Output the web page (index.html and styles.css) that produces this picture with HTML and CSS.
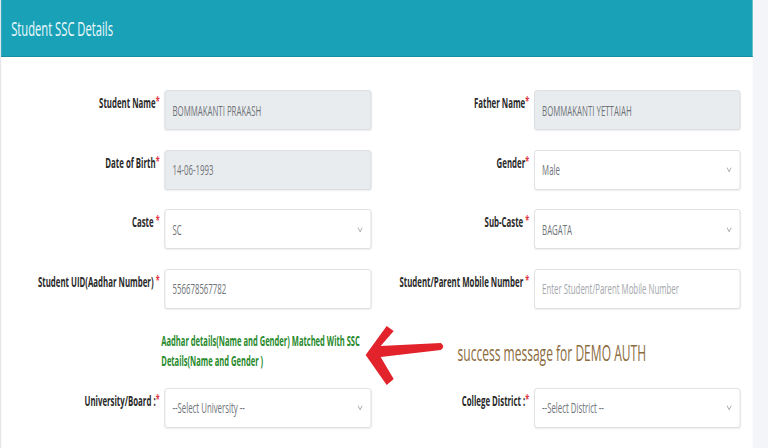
FILE: index.html
```html
<!DOCTYPE html>
<html lang="en">
<head>
    <meta charset="UTF-8">
    <meta name="viewport" content="width=device-width, initial-scale=1.0">
    <title>Student SSC Details</title>
    <link rel="stylesheet" href="styles.css">
</head>
<body>
    <div class="page">
        <div class="card">
            <div class="card-header">Student SSC Details</div>

            <div class="card-body">
                <div class="form-grid">
                    <label class="field-label">Student Name<span class="req">*</span></label>
                    <div class="field readonly">BOMMAKANTI PRAKASH</div>
                    <label class="field-label">Father Name<span class="req">*</span></label>
                    <div class="field readonly">BOMMAKANTI YETTAIAH</div>

                    <label class="field-label">Date of Birth<span class="req">*</span></label>
                    <div class="field readonly">14-06-1993</div>
                    <label class="field-label">Gender<span class="req">*</span></label>
                    <div class="field select">Male</div>

                    <label class="field-label">Caste <span class="req">*</span></label>
                    <div class="field select">SC</div>
                    <label class="field-label">Sub-Caste <span class="req">*</span></label>
                    <div class="field select">BAGATA</div>

                    <label class="field-label">Student UID(Aadhar Number) <span class="req">*</span></label>
                    <div class="field">556678567782</div>
                    <label class="field-label">Student/Parent Mobile Number <span class="req">*</span></label>
                    <div class="field placeholder">Enter Student/Parent Mobile Number</div>

                    <div class="match-msg">Aadhar details(Name and Gender) Matched With SSC Details(Name and Gender )</div>

                    <label class="field-label">University/Board :<span class="req">*</span></label>
                    <div class="field select">--Select University --</div>
                    <label class="field-label">College District :<span class="req">*</span></label>
                    <div class="field select">--Select District --</div>
                </div>

                <!-- annotation drawn over the screenshot -->
                <div class="note">
                    <svg class="note-arrow" viewBox="0 0 85 65" preserveAspectRatio="none">
                        <path d="M5 32 L26 3 L33 8 L20 23 L80 20 Q85 23.5 80 27 L20 34 L33 56 L26 62 Z" fill="#e3232b"/>
                    </svg>
                    <span class="note-text">success message for DEMO AUTH</span>
                </div>
            </div>
        </div>
    </div>
</body>
</html>
```

FILE: styles.css
```css
* {
    margin: 0;
    padding: 0;
    box-sizing: border-box;
    font-family: 'Open Sans', 'Liberation Sans', sans-serif;
}

html,
body {
    overflow: hidden;
    height: 448px;
}

body {
    background: #f4f5f8;
}

/* the source screenshot is squeezed horizontally */
.page {
    width: 1372px;
    transform: scaleX(0.56);
    transform-origin: 0 0;
}

.card {
    width: 1344px;
    height: 448px;
    background: #fff;
    border-left: 2px solid #e4e6ea;
}

.card-header {
    height: 57px;
    background: #19a2b7;
    border-bottom: 1px solid #148fa2;
    color: #eef9fb;
    font-size: 20px;
    line-height: 57px;
    padding-left: 18px;
}

.card-body {
    position: relative;
    padding: 33px 20px 0 1px;
}

.form-grid {
    display: grid;
    grid-template-columns: 291px 369px 291px 368px;
    grid-auto-rows: 40px;
    row-gap: 19.5px;
}

.field-label {
    text-align: right;
    padding: 4px 9px 0 0;
    font-size: 14px;
    font-weight: 700;
    line-height: 17px;
    color: #2a2a2a;
    white-space: nowrap;
}

.req {
    color: #e0303a;
    font-size: 13px;
    position: relative;
    top: -2px;
}

.field {
    border: 1px solid #d7dade;
    border-radius: 4px;
    box-shadow: 0 1px 2px rgba(0, 0, 0, 0.07);
    background: #fff;
    padding-left: 13px;
    display: flex;
    align-items: center;
    font-size: 14px;
    color: #6e7378;
}

.field.readonly {
    background: #e9ecef;
}

.field.placeholder {
    color: #a3a7ab;
}

.field.select {
    justify-content: space-between;
    padding-right: 16px;
}

.field.select::after {
    content: '';
    width: 5px;
    height: 5px;
    border-right: 1.5px solid #9a9ea2;
    border-bottom: 1.5px solid #9a9ea2;
    transform: rotate(45deg);
    margin-top: -3px;
}

.match-msg {
    grid-column: 2 / 5;
    height: 45px;
    width: 385px;
    margin-left: -6px;
    padding-top: 3px;
    font-size: 13.5px;
    font-weight: 700;
    line-height: 20px;
    color: #27892b;
}

.note {
    position: absolute;
    left: 642px;
    top: 266px;
    display: flex;
    align-items: center;
}

.note-arrow {
    width: 152px;
    height: 65px;
}

.note-text {
    margin-left: 21px;
    margin-top: -6px;
    font-size: 21.5px;
    color: #8c6b3e;
    white-space: nowrap;
}
```
